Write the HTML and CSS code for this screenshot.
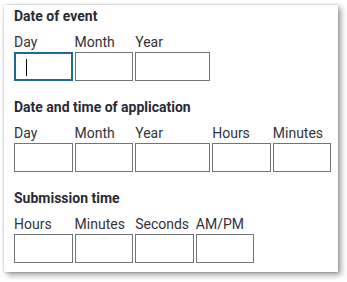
FILE: index.html
```html
<!DOCTYPE html>
<html lang="en">
<head>
<meta charset="utf-8">
<title>Date fields</title>
<link rel="stylesheet" href="styles.css">
</head>
<body>
<div class="card">
  <section class="group">
    <h2 class="heading">Date of event</h2>
    <div class="fields">
      <label class="field">
        <span class="label">Day</span>
        <span class="input-wrap">
          <input class="input input-focus" type="text">
          <span class="caret"></span>
        </span>
      </label>
      <label class="field">
        <span class="label">Month</span>
        <input class="input" type="text">
      </label>
      <label class="field field-wide">
        <span class="label">Year</span>
        <input class="input" type="text">
      </label>
    </div>
  </section>

  <section class="group">
    <h2 class="heading">Date and time of application</h2>
    <div class="fields">
      <label class="field">
        <span class="label">Day</span>
        <input class="input" type="text">
      </label>
      <label class="field">
        <span class="label">Month</span>
        <input class="input" type="text">
      </label>
      <label class="field field-wide">
        <span class="label">Year</span>
        <input class="input" type="text">
      </label>
      <label class="field">
        <span class="label">Hours</span>
        <input class="input" type="text">
      </label>
      <label class="field">
        <span class="label">Minutes</span>
        <input class="input" type="text">
      </label>
    </div>
  </section>

  <section class="group">
    <h2 class="heading">Submission time</h2>
    <div class="fields">
      <label class="field">
        <span class="label">Hours</span>
        <input class="input" type="text">
      </label>
      <label class="field">
        <span class="label">Minutes</span>
        <input class="input" type="text">
      </label>
      <label class="field">
        <span class="label">Seconds</span>
        <input class="input" type="text">
      </label>
      <label class="field">
        <span class="label">AM/PM</span>
        <input class="input" type="text">
      </label>
    </div>
  </section>
</div>
</body>
</html>
```

FILE: styles.css
```css
html, body {
  margin: 0;
  padding: 0;
  background: #ffffff;
}

body {
  font-family: Roboto, "Liberation Sans", Arial, sans-serif;
  width: 347px;
  height: 282px;
  overflow: hidden;
}

.card {
  margin: 5px 0 0 4px;
  width: 334px;
  box-sizing: border-box;
  padding: 3px 10px 9px 10px;
  background: #ffffff;
  box-shadow: 0 0 2px rgba(0, 0, 0, 0.28), 3px 3px 6px rgba(0, 0, 0, 0.38);
}

.group + .group {
  margin-top: 18px;
}

.heading {
  margin: 0 0 9px 0;
  font-size: 14px;
  line-height: 17px;
  font-weight: 700;
  color: #2a2a36;
}

.fields {
  display: flex;
  gap: 2px;
}

.field {
  display: flex;
  flex-direction: column;
  flex: 0 0 58.6px;
  width: 58.6px;
}

.field-wide {
  flex-basis: 75px;
  width: 75px;
}

.label {
  font-size: 14px;
  line-height: 17px;
  color: #333338;
  margin-bottom: 1px;
  white-space: nowrap;
}

.input-wrap {
  position: relative;
  display: block;
}

.input {
  display: block;
  box-sizing: border-box;
  width: 100%;
  height: 29px;
  margin: 0;
  padding: 0 6px;
  border: 1px solid #727479;
  border-radius: 0;
  background: #ffffff;
  font-family: inherit;
  font-size: 14px;
  outline: none;
}

.input-focus {
  border: 2px solid #1c6a95;
}

.caret {
  position: absolute;
  left: 12px;
  top: 7px;
  width: 1px;
  height: 17px;
  background: #000000;
}
```
